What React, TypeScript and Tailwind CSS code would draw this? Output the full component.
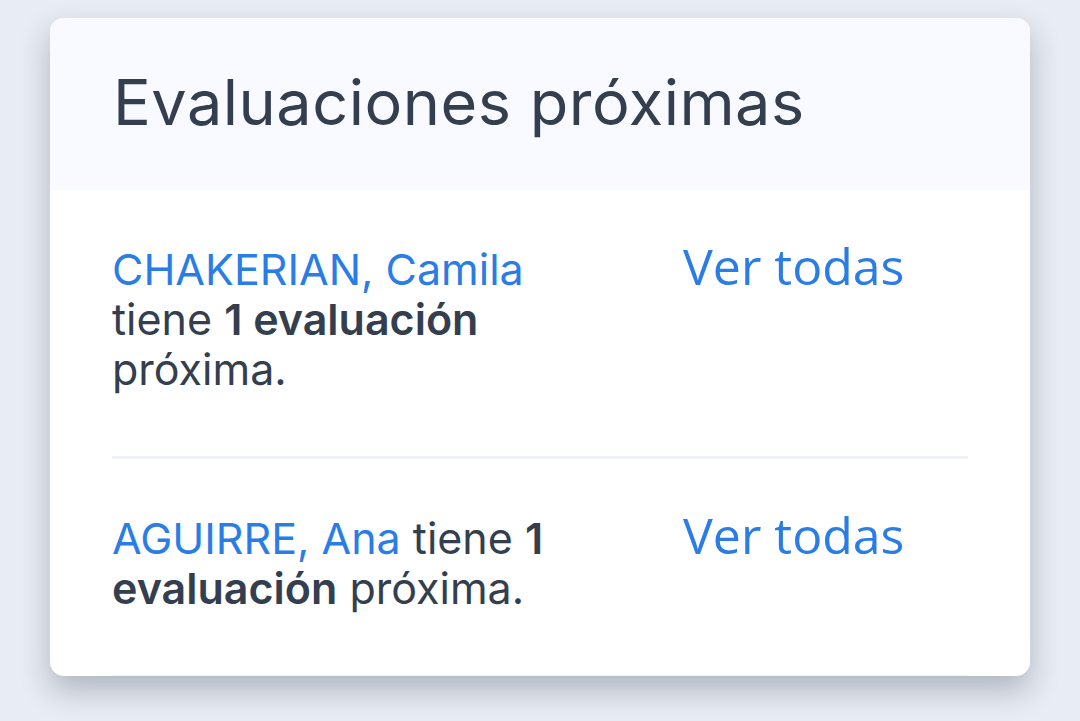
import React from "react";

const ROWS = [
  { name: "CHAKERIAN, Camila", count: 1 },
  { name: "AGUIRRE, Ana", count: 1 },
];

export default function App() {
  return (
    <div className="w-[1080px] h-[721px] bg-[#e8ecf4] pt-[18px] pl-[50px] overflow-hidden">
      <div
        className="w-[980px] h-[658px] bg-white rounded-[14px] overflow-hidden shadow-[0_14px_30px_rgba(30,41,59,0.28)]"
        style={{ fontFamily: "Inter, 'Noto Sans', sans-serif" }}
      >
        {/* Header */}
        <div className="h-[172px] bg-[#f8faff] flex items-center px-[63px]">
          <h2 className="text-[63px] text-[#333e4f] leading-none tracking-[0.5px] -mt-[4px]">Evaluaciones próximas</h2>
        </div>

        {/* Rows */}
        <div className="px-[62px]">
          {ROWS.map((r) => (
            <div key={r.name} className="flex items-baseline pt-[51px] pb-[62px] border-b-[3px] border-[#eef1f6]">
              <p className="w-[460px] shrink-0 text-[43px] leading-[50px] text-[#333e4f]">
                <span className="text-[#2b7de6]">{r.name}</span> tiene{" "}
                <span className="font-semibold">{r.count} evaluación</span> próxima.
              </p>
              <a
                href="#"
                className="ml-[111px] text-[50px] leading-[50px] text-[#2b7de6]"
                style={{ fontFamily: "'Open Sans', sans-serif" }}
              >
                Ver todas
              </a>
            </div>
          ))}
        </div>
      </div>
    </div>
  );
}
